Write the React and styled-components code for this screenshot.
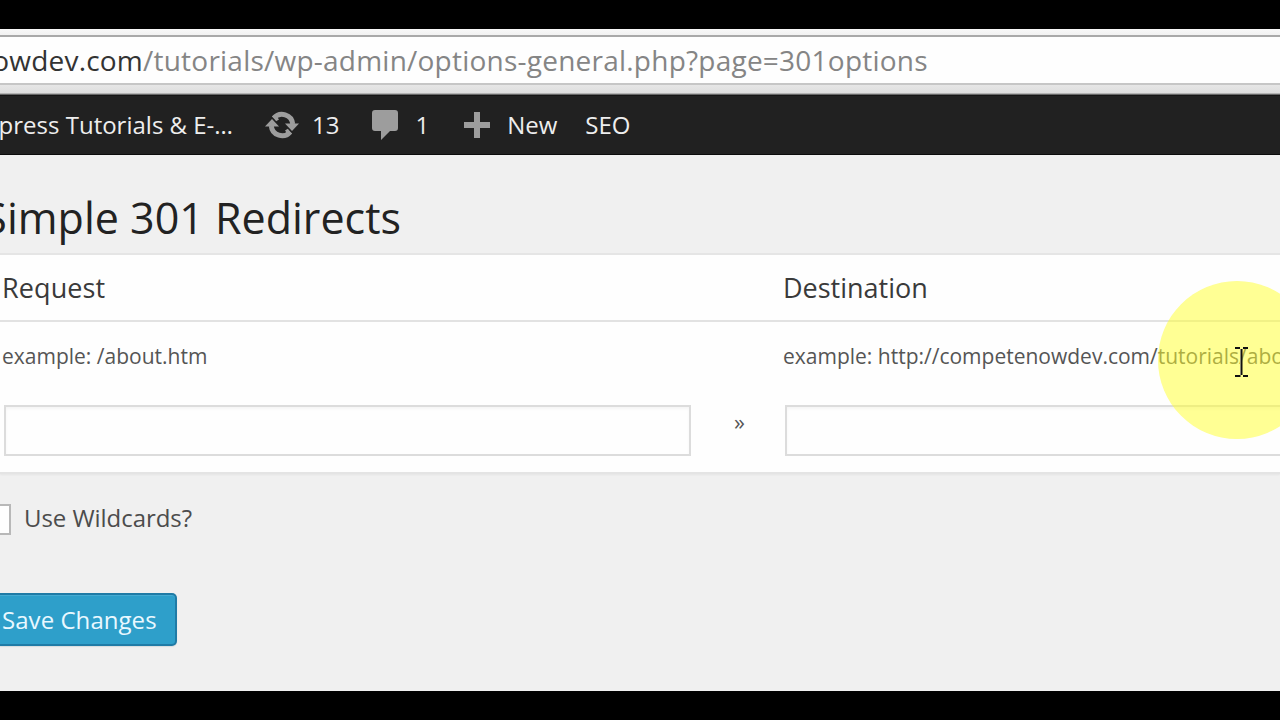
import React from "react";
import styled, { createGlobalStyle } from "styled-components";

const GlobalStyle = createGlobalStyle`
    * {
        box-sizing: border-box;
    }
    body {
        margin: 0;
        background: #000;
        font-family: "Open Sans", "Noto Sans", sans-serif;
        overflow: hidden;
    }
`;

const Screen = styled.div`
    width: 1280px;
    height: 720px;
    padding: 29px 0;
    overflow: hidden;
    position: relative;
    background: #000;
`;

const Browser = styled.div`
    height: 66px;
    padding-top: 6px;
    background: linear-gradient(#f8f8f8 0, #f2f2f2 6px, #e6e6e6 56px, #dedede 64px, #8a8a8a 65px, #444 66px);
`;

const AddressBar = styled.div`
    height: 50px;
    display: flex;
    align-items: center;
    background: #fefefe;
    border-top: 2px solid #a9a9a9;
    border-bottom: 2px solid #c6c6c6;
    color: #858585;
    font-size: 28px;
    line-height: 46px;
    white-space: nowrap;
`;

// everything scrolled past the left edge hangs out of a right-aligned box
const Clipped = styled.span`
    flex: none;
    display: flex;
    justify-content: flex-end;
    width: ${p => p.$width}px;
    color: ${p => p.$color || "inherit"};
    letter-spacing: ${p => p.$spacing || 0}px;
    white-space: nowrap;
`;

const Spaced = styled.span`
    letter-spacing: ${p => p.$spacing || 0}px;
    white-space: nowrap;
`;

const AdminBar = styled.div`
    height: 60px;
    display: flex;
    align-items: center;
    background: #212121;
    border-top: 1px solid #161616;
    border-bottom: 1px solid #0c0c0c;
    color: #eee;
    font-size: 24px;
    line-height: 60px;
`;

const BarItem = styled.div`
    display: flex;
    align-items: center;
    gap: ${p => p.$gap || 0}px;
    margin-left: ${p => p.$left}px;

    svg {
        display: block;
        flex: none;
        fill: #9d9d9d;
    }
`;

const Page = styled.div`
    height: 536px;
    background: #f0f0f0;
    color: #444;
    overflow: hidden;
`;

const Title = styled.h2`
    margin: 0;
    height: 98px;
    padding-top: 33px;
    font-weight: 400;
    font-size: 43px;
    line-height: 60px;
    color: #222;
`;

const Panel = styled.div`
    height: 221px;
    background: #fefefe;
    border-top: 2px solid #e5e5e5;
    border-bottom: 2px solid #e4e4e4;
    box-shadow: 0 1px 2px rgba(0, 0, 0, 0.05);
`;

const Row = styled.div`
    display: grid;
    grid-template-columns: 691px 94px 1fr;
    height: ${p => p.$height}px;
    align-items: center;
`;

const TextRow = styled(Row)`
    grid-template-columns: 689px 92px 1fr;
    padding-left: 2px;
`;

const HeadRow = styled(TextRow)`
    border-bottom: 2px solid #e2e2e2;
    font-size: 27px;
    color: #3a3a3a;
`;

const ExampleRow = styled(TextRow)`
    padding-bottom: 2px;
    font-size: 21px;
    color: #555;
`;

const FieldRow = styled(Row)`
    align-items: start;
    padding-top: 14px;
`;

const Field = styled.input`
    display: block;
    width: ${p => p.$width}px;
    height: 51px;
    margin-left: ${p => p.$left || 0}px;
    padding: 0 8px;
    border: 2px solid #dcdcdc;
    border-radius: 0;
    background: #fefefe;
    box-shadow: inset 0 2px 3px rgba(0, 0, 0, 0.04);
    outline: none;
`;

const Arrow = styled.div`
    padding-left: 43px;
    font-size: 22px;
    line-height: 33px;
    color: #555;
`;

const Wildcards = styled.label`
    display: flex;
    align-items: center;
    gap: 13px;
    margin-top: 29px;
    height: 32px;
    font-size: 24px;
    line-height: 28px;
    color: #4c4c4c;

    ${Spaced} {
        padding-bottom: 2px;
    }
`;

const Checkbox = styled.span`
    width: 11px;
    height: 31px;
    background: #fefefe;
    border: 2px solid #b8b8b8;
    border-left: 0;
`;

const SaveButton = styled.button`
    display: flex;
    align-items: center;
    width: 177px;
    height: 53px;
    margin-top: 58px;
    padding: 0 0 0 2px;
    border: 2px solid #1f7ba6;
    border-left: 0;
    border-radius: 0 5px 5px 0;
    background: #2e9fca;
    box-shadow: inset 0 1px 0 #45abd2, 0 1px 1px #d8dcde;
    color: #e9f8ff;
    font-family: inherit;
    font-size: 24px;
`;

const Spotlight = styled.div`
    position: absolute;
    left: 1158px;
    top: 281px;
    width: 158px;
    height: 158px;
    border-radius: 50%;
    background: rgba(255, 255, 50, 0.52);
`;

const Cursor = styled.svg`
    position: absolute;
    left: 1234px;
    top: 346px;
`;

const UpdateIcon = () => <svg width="36" height="30" viewBox="0 0 36 30">
    <g fill="none" stroke="#9d9d9d" strokeWidth="5">
        <path d="M9.8 8.2 A10.7 10.7 0 0 1 28.7 14" />
        <path d="M26.2 21.8 A10.7 10.7 0 0 1 7.3 16" />
    </g>
    <path d="M8 6.2 L11.5 4.4 L15 9.5 L12.2 11.2 Z" />
    <path d="M28 23.8 L24.5 25.6 L21 20.5 L23.8 18.8 Z" />
    <path d="M21 13.6 H35 L28 21 Z" />
    <path d="M15 16.4 H1 L8 9 Z" />
</svg>;

const CommentIcon = () => <svg width="26" height="30" viewBox="0 0 26 30">
    <path d="M3 0 H23 Q26 0 26 3 V18 Q26 21 23 21 H18 L9 30 V21 H3 Q0 21 0 18 V3 Q0 0 3 0 Z" />
</svg>;

const PlusIcon = () => <svg width="26" height="26" viewBox="0 0 26 26">
    <path d="M10 0 H16 V10 H26 V16 H16 V26 H10 V16 H0 V10 H10 Z" />
</svg>;

const App = () => <Screen>
    <GlobalStyle />
    <Browser>
        <AddressBar>
            <Clipped $width={143} $color="#333" $spacing={0.2}>owdev.com</Clipped>
            <Spaced $spacing={0.23}>/tutorials/wp-admin/options-general.php?page=301options</Spaced>
        </AddressBar>
    </Browser>
    <AdminBar>
        <Clipped $width={233}>press Tutorials &amp; E-…</Clipped>
        <BarItem $left={31} $gap={12}><UpdateIcon /><Spaced>13</Spaced></BarItem>
        <BarItem $left={33} $gap={17}><CommentIcon /><Spaced>1</Spaced></BarItem>
        <BarItem $left={35} $gap={17}><PlusIcon /><Spaced>New</Spaced></BarItem>
        <BarItem $left={28}><Spaced>SEO</Spaced></BarItem>
    </AdminBar>
    <Page>
        <Title><Clipped $width={401}>Simple 301 Redirects</Clipped></Title>
        <Panel>
            <HeadRow $height={67}>
                <Spaced $spacing={0.1}>Request</Spaced>
                <span />
                <Spaced>Destination</Spaced>
            </HeadRow>
            <ExampleRow $height={69}>
                <Spaced>example: /about.htm</Spaced>
                <span />
                <Spaced>example: http://competenowdev.com/tutorials/about/</Spaced>
            </ExampleRow>
            <FieldRow $height={81}>
                <Field $left={4} $width={687} />
                <Arrow>»</Arrow>
                <Field $width={520} />
            </FieldRow>
        </Panel>
        <Wildcards><Checkbox /><Spaced $spacing={-0.05}>Use Wildcards?</Spaced></Wildcards>
        <SaveButton><Spaced $spacing={0.05}>Save Changes</Spaced></SaveButton>
    </Page>
    <Spotlight />
    <Cursor width="16" height="32" viewBox="0 0 16 32">
        <path d="M1 1 H6 V3 H9 V1 H14 V3 H8.5 V29 H14 V31 H9 V29 H6.5 V31 H1 V29 H6.5 V3 H1 Z" fill="#111" />
        <path d="M6.5 3 V29" stroke="#8c8c70" strokeWidth="1" />
    </Cursor>
</Screen>;

export default App;
